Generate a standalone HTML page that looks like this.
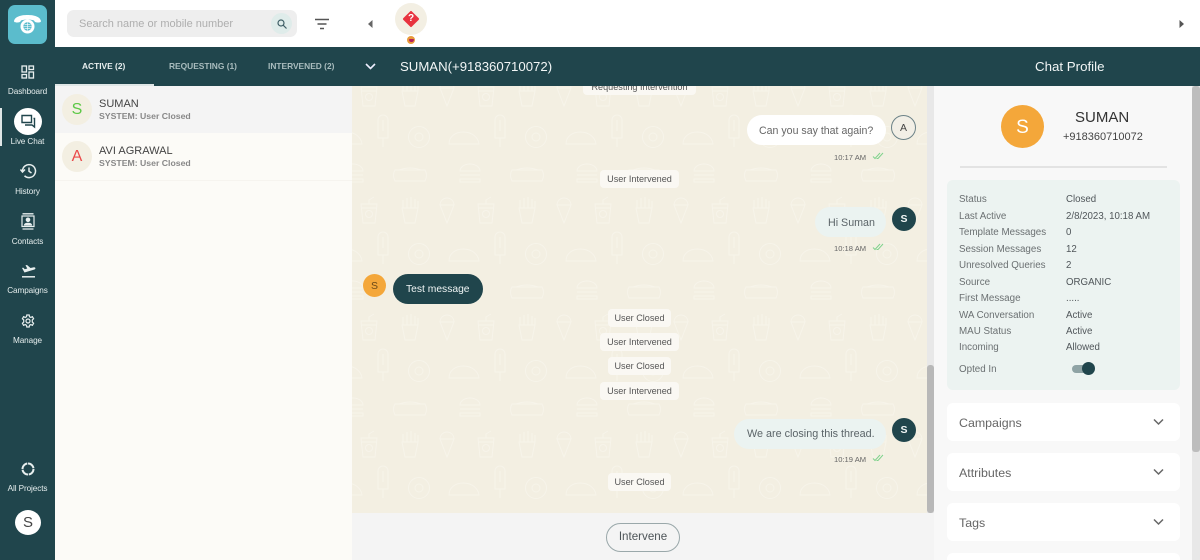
<!DOCTYPE html>
<html><head><meta charset="utf-8"><style>
*{box-sizing:border-box}
html,body{margin:0;width:1200px;height:560px;overflow:hidden;background:#fff;font-family:"Liberation Sans",sans-serif}
body{position:relative;filter:blur(.25px)}
.a{position:absolute}
.t{position:absolute;white-space:nowrap;line-height:1}
.nl{position:absolute;left:0;width:55px;text-align:center;font-size:8.2px;color:#e6eeee;line-height:1;white-space:nowrap;letter-spacing:-.1px;margin-top:1px}
.sys{position:absolute;background:#faf8f3;border-radius:4px;height:18px;font-size:9.1px;line-height:19px;text-align:center;color:#555;white-space:nowrap}
.row{position:absolute;left:959px;font-size:9.8px;color:#6b7072;white-space:nowrap;line-height:1}
.val{position:absolute;left:1066px;font-size:9.7px;color:#50565a;white-space:nowrap;line-height:1}
.card{position:absolute;left:947px;width:233px;height:38px;background:#fff;border-radius:6px}
.card span{position:absolute;left:12px;top:14px;font-size:12.4px;color:#666;line-height:1}
.card svg{position:absolute;left:206px;top:15px}
.time{position:absolute;font-size:7.6px;color:#666;line-height:1;white-space:nowrap}
.tab{position:absolute;top:62px;font-size:8.4px;font-weight:bold;line-height:1;white-space:nowrap}
</style></head><body>
<div class="a" style="left:55px;top:0;width:1145px;height:47px;background:#fff"></div>
<div class="a" style="left:67px;top:10px;width:230px;height:27px;background:#eeeeee;border-radius:7px"></div>
<div class="t" style="left:79px;top:18px;font-size:11px;line-height:12px;color:#aeaeae">Search name or mobile number</div>
<div class="a" style="left:271px;top:13px;width:21px;height:21px;border-radius:50%;background:#dfecea"></div>
<svg class="a" style="left:276px;top:18px" width="12" height="12" viewBox="0 0 12 12" fill="none" stroke="#3f5f66" stroke-width="1.200"><circle cx="5" cy="5" r="3"/><path d="M7.200 7.200 10.500 10.500"/></svg>
<svg class="a" style="left:314px;top:18px" width="16" height="12" viewBox="0 0 16 12" fill="none" stroke="#555" stroke-width="1.500"><path d="M1 1.500H15M3.500 6H12.500M6 10.500H10"/></svg>
<svg class="a" style="left:367px;top:20px" width="7" height="8" viewBox="0 0 7 8"><path d="M5.500 0V8L1 4Z" fill="#666"/></svg>
<div class="a" style="left:395px;top:3px;width:32px;height:32px;border-radius:50%;background:#f3efe3"></div>
<div class="a" style="left:405px;top:13px;width:12px;height:12px;background:#e8333f;transform:rotate(45deg);border-radius:1px"></div>
<div class="t" style="left:395px;top:14px;width:32px;text-align:center;font-size:10px;font-weight:bold;color:#fff">?</div>
<div class="a" style="left:407px;top:36px;width:8px;height:8px;border-radius:50%;background:#e89a3a"></div>
<div class="a" style="left:408.500px;top:39px;width:5px;height:3px;border-radius:1px 1px 3px 3px;background:#b01f5e"></div>
<svg class="a" style="left:1178px;top:20px" width="7" height="8" viewBox="0 0 7 8"><path d="M1.500 0V8L6 4Z" fill="#555"/></svg>

<div class="a" style="left:0;top:0;width:55px;height:560px;background:#20454c"></div>
<div class="a" style="left:8px;top:5px;width:39px;height:39px;border-radius:7px;background:#5bbccc"></div>
<svg class="a" style="left:13px;top:14px" width="30" height="22" viewBox="0 0 30 22"><path d="M1 7C2 2.500 8 1 14.500 1S27 2.500 28 7C28 8.500 26 8.500 24.500 8.500S21.500 8 21 6.500C19 5.300 10 5.300 8 6.500C7.500 8 6 8.500 4.500 8.500S1 8.500 1 7Z" fill="#fff"/><circle cx="14.500" cy="12.500" r="7" fill="#fff"/><circle cx="14.500" cy="12.500" r="4.200" fill="#5bbccc"/><path d="M10.500 12.500H18.500M14.500 8.500V16.500M11.500 10.300H17.500M11.500 14.700H17.500" stroke="#fff" stroke-width=".6"/></svg>

<svg class="a" style="left:21px;top:65px" width="14" height="14" viewBox="0 0 14 14" fill="none" stroke="#e8efef" stroke-width="1.300"><rect x="1" y="1" width="4.500" height="6"/><rect x="8" y="1" width="4.500" height="3.500"/><rect x="1" y="9.500" width="4.500" height="3.500"/><rect x="8" y="7" width="4.500" height="6"/></svg>
<div class="nl" style="top:87px">Dashboard</div>
<div class="a" style="left:0;top:108px;width:1.500px;height:38px;background:#dfe6e6"></div>
<div class="a" style="left:14px;top:108px;width:28px;height:27px;border-radius:50%;background:#fff"></div>
<svg class="a" style="left:20px;top:114px" width="16" height="15" viewBox="0 0 16 15" fill="none" stroke="#20454c" stroke-width="1.400"><path d="M2 1.500H11.500V8.500H2Z"/><path d="M13.500 4.500H14.500V13L12 11H5"/></svg>
<div class="nl" style="top:137px">Live Chat</div>
<svg class="a" style="left:20px;top:163px" width="17" height="16" viewBox="0 0 17 16" fill="none" stroke="#e8efef" stroke-width="1.500"><path d="M2.500 8A6.500 6.500 0 1 1 4.500 12.800"/><path d="M.5 6.500 2.500 9 5 6.500"/><path d="M9 4.500V8.200L11.500 10"/></svg>
<div class="nl" style="top:187px">History</div>
<svg class="a" style="left:21px;top:213px" width="14" height="17" viewBox="0 0 14 17" fill="none" stroke="#e8efef" stroke-width="1.200"><path d="M1.500 .8H12.500M1.500 16H12.500" stroke-width="1.300"/><rect x="1" y="3" width="12" height="10.500"/><circle cx="7" cy="6.800" r="1.700" fill="#e8efef"/><path d="M3.500 12C4 9.800 10 9.800 10.500 12Z" fill="#e8efef"/></svg>
<div class="nl" style="top:237px">Contacts</div>
<svg class="a" style="left:21px;top:265px" width="15" height="13" viewBox="0 0 15 13"><path d="M1 11.800H14" stroke="#e8efef" stroke-width="1.500"/><path d="M1 3 2.200 2.600 3.800 4.200 6.300 3.500 4.500 .3 6 0 9.500 3 13 2.200C14.800 2.200 14.800 4 13.500 4.500L3.500 7.500Z" fill="#e8efef"/></svg>
<div class="nl" style="top:286px">Campaigns</div>
<svg class="a" style="left:21px;top:314px" width="14" height="14" viewBox="0 0 14 14" fill="none" stroke="#e8efef" stroke-width="1.200"><circle cx="7" cy="7" r="2"/><path d="M5.800 1H8.200L8.500 2.700 9.800 3.400 11.400 2.700 12.600 4.800 11.300 5.900V8.100L12.600 9.200 11.400 11.300 9.800 10.600 8.500 11.300 8.200 13H5.800L5.500 11.300 4.200 10.600 2.600 11.300 1.400 9.200 2.700 8.100V5.900L1.400 4.800 2.600 2.700 4.200 3.400 5.500 2.700Z"/></svg>
<div class="nl" style="top:336px">Manage</div>
<svg class="a" style="left:21px;top:462px" width="14" height="14" viewBox="0 0 14 14" fill="none" stroke="#e8efef" stroke-width="2"><circle cx="7" cy="7" r="5.500" stroke-dasharray="7.800 .8"/></svg>
<div class="nl" style="top:484px">All Projects</div>
<div class="a" style="left:15px;top:510px;width:26px;height:25px;border-radius:50%;background:#fff"></div>
<div class="t" style="left:15px;top:515px;width:26px;text-align:center;font-size:15px;color:#444">S</div>

<div class="a" style="left:55px;top:86px;width:297px;height:474px;background:#fcfbf7"></div>
<div class="a" style="left:55px;top:86px;width:297px;height:47px;background:#f4f4f4"></div>
<div class="a" style="left:55px;top:180px;width:297px;height:1px;background:#f6f4ef"></div>
<div class="a" style="left:62px;top:94px;width:30px;height:31px;border-radius:50%;background:#f3efe2"></div>
<div class="t" style="left:62px;top:102px;width:30px;text-align:center;font-size:16px;color:#5cc845">S</div>
<div class="t" style="left:99px;top:99px;font-size:11px;color:#444">SUMAN</div>
<div class="t" style="left:99px;top:112px;font-size:8.700px;color:#888;font-weight:bold">SYSTEM: User Closed</div>
<div class="a" style="left:62px;top:141px;width:30px;height:31px;border-radius:50%;background:#f3efe2"></div>
<div class="t" style="left:62px;top:149px;width:30px;text-align:center;font-size:16px;color:#ea4a4a">A</div>
<div class="t" style="left:99px;top:146px;font-size:11px;color:#444">AVI AGRAWAL</div>
<div class="t" style="left:99px;top:159px;font-size:8.700px;color:#888;font-weight:bold">SYSTEM: User Closed</div>

<svg class="a" style="left:352px;top:86px" width="575" height="427">
<defs><pattern id="p" x="0" y="-8" width="117" height="117" patternUnits="userSpaceOnUse">
<rect width="117" height="117" fill="#f3efe2"/>
<g fill="none" stroke="#f7f4ea" stroke-width="1">
<path d="M9 9H25L23 28H11ZM10 13H24M17 9V5L22 2"/><circle cx="17" cy="19" r="3.500"/>
<path d="M50 13H66L63 28H53ZM51 13V5M55 13V3M59 13V2M63 13V4M66 13V6"/>
<path d="M88 10H102L95 28ZM88 10A7 7 0 0 1 102 10"/>
<path d="M26 42A5 5 0 0 1 36 42V60H26ZM31 60V69M31 42V53"/>
<circle cx="67" cy="59" r="10.500"/><circle cx="67" cy="59" r="4"/>
<path d="M97 66C97 50 125 50 127 66Z"/><path d="M-20 66C-20 50 8 50 10 66Z"/>
<path d="M43 92H73Q76 97 73 103H43Q40 97 43 92ZM47 92Q58 88 69 92"/>
<path d="M-9 93A10 7 0 0 1 11 93ZM-9 97H11M-9 101H11V104H-9ZM108 93A10 7 0 0 1 128 93ZM108 97H128M108 101H128V104H108Z"/>
</g></pattern></defs>
<rect width="575" height="427" fill="url(#p)"/></svg>

<div class="sys" style="left:583px;top:78px;width:113px;height:17px;">Requesting Intervention</div>
<div class="a" style="left:55px;top:47px;width:1145px;height:39px;background:#20454c"></div>
<div class="a" style="left:55px;top:84px;width:99px;height:2px;background:#dfe6e6"></div>
<div class="tab" style="left:82px;color:#e8efef">ACTIVE (2)</div>
<div class="tab" style="left:169px;color:#a9bcbe">REQUESTING (1)</div>
<div class="tab" style="left:268px;color:#a9bcbe">INTERVENED (2)</div>
<svg class="a" style="left:365px;top:62px" width="11" height="9" viewBox="0 0 11 9" fill="none" stroke="#eef" stroke-width="1.600"><path d="M1 2 5.500 6.500 10 2"/></svg>
<div class="t" style="left:400px;top:60px;font-size:13.200px;color:#f2f6f6">SUMAN(+918360710072)</div>
<div class="t" style="left:1035px;top:60px;font-size:13.300px;color:#f2f6f6">Chat Profile</div>

<div class="a" style="left:747px;top:115px;width:139px;height:30px;border-radius:15px;background:#fff"></div>
<div class="t" style="left:759px;top:126px;font-size:10.600px;color:#666">Can you say that again?</div>
<div class="a" style="left:891px;top:115px;width:25px;height:25px;border-radius:50%;background:#f2efe6;border:1px solid #6c8287"></div>
<div class="t" style="left:891px;top:123px;width:25px;text-align:center;font-size:10.500px;color:#444">A</div>
<div class="time" style="left:834px;top:154px">10:17 AM</div>
<svg class="a" style="left:872px;top:152px" width="12" height="8" viewBox="0 0 12 8" fill="none" stroke="#7fd28c" stroke-width="1"><path d="M1 4.500 3 6.500 8 1M4.500 6.500 6 6.500 11 1"/></svg>

<div class="sys" style="left:600px;top:170px;width:79px">User Intervened</div>

<div class="a" style="left:815px;top:207px;width:71px;height:30px;border-radius:15px;background:#ebf3f1"></div>
<div class="t" style="left:828px;top:218px;font-size:10.700px;color:#5b6468">Hi Suman</div>
<div class="a" style="left:892px;top:207px;width:24px;height:24px;border-radius:50%;background:#20454c"></div>
<div class="t" style="left:892px;top:214px;width:24px;text-align:center;font-size:10.500px;color:#f0f5f5;font-weight:bold">S</div>
<div class="time" style="left:834px;top:245px">10:18 AM</div>
<svg class="a" style="left:872px;top:243px" width="12" height="8" viewBox="0 0 12 8" fill="none" stroke="#7fd28c" stroke-width="1"><path d="M1 4.500 3 6.500 8 1M4.500 6.500 6 6.500 11 1"/></svg>

<div class="a" style="left:363px;top:274px;width:23px;height:23px;border-radius:50%;background:#f4a73a"></div>
<div class="t" style="left:363px;top:281px;width:23px;text-align:center;font-size:10.500px;color:#6b4a18">S</div>
<div class="a" style="left:393px;top:274px;width:90px;height:30px;border-radius:15px;background:#20454c"></div>
<div class="t" style="left:406px;top:285px;font-size:10.300px;color:#f0f5f5">Test message</div>

<div class="sys" style="left:608px;top:309px;width:63px">User Closed</div>
<div class="sys" style="left:600px;top:333px;width:79px">User Intervened</div>
<div class="sys" style="left:608px;top:357px;width:63px">User Closed</div>
<div class="sys" style="left:600px;top:382px;width:79px">User Intervened</div>

<div class="a" style="left:734px;top:419px;width:152px;height:30px;border-radius:15px;background:#ebf3f1"></div>
<div class="t" style="left:747px;top:429px;font-size:10.800px;color:#5b6468">We are closing this thread.</div>
<div class="a" style="left:892px;top:418px;width:24px;height:24px;border-radius:50%;background:#20454c"></div>
<div class="t" style="left:892px;top:425px;width:24px;text-align:center;font-size:10.500px;color:#f0f5f5;font-weight:bold">S</div>
<div class="time" style="left:834px;top:456px">10:19 AM</div>
<svg class="a" style="left:872px;top:454px" width="12" height="8" viewBox="0 0 12 8" fill="none" stroke="#7fd28c" stroke-width="1"><path d="M1 4.500 3 6.500 8 1M4.500 6.500 6 6.500 11 1"/></svg>

<div class="sys" style="left:608px;top:473px;width:63px">User Closed</div>

<div class="a" style="left:927px;top:86px;width:7px;height:427px;background:#e8e8e8"></div>
<div class="a" style="left:927px;top:365px;width:7px;height:148px;background:#b8b8b8;border-radius:3px"></div>
<div class="a" style="left:352px;top:513px;width:582px;height:47px;background:#f4f4f4"></div>
<div class="a" style="left:606px;top:523px;width:74px;height:29px;border-radius:15px;border:1px solid #9aa8aa;background:#f4f4f4"></div>
<div class="t" style="left:606px;top:531px;width:74px;text-align:center;font-size:11.600px;color:#4d5458">Intervene</div>

<div class="a" style="left:934px;top:86px;width:258px;height:474px;background:#f8f8f8"></div>
<div class="a" style="left:1192px;top:86px;width:8px;height:474px;background:#e8e8e8"></div>
<div class="a" style="left:1192px;top:86px;width:8px;height:366px;background:#bdbdbd;border-radius:3px"></div>
<div class="a" style="left:1001px;top:105px;width:43px;height:43px;border-radius:50%;background:#f4a73a"></div>
<div class="t" style="left:1001px;top:118px;width:43px;text-align:center;font-size:19px;color:#fff">S</div>
<div class="t" style="left:1075px;top:110px;font-size:15px;color:#333">SUMAN</div>
<div class="t" style="left:1063px;top:132px;font-size:11px;color:#444">+918360710072</div>
<div class="a" style="left:960px;top:166px;width:207px;height:2px;background:#e3e3e3"></div>
<div class="a" style="left:947px;top:180px;width:233px;height:210px;border-radius:6px;background:#ecf3f1"></div>

<div class="row" style="top:195px">Status</div><div class="val" style="top:195px">Closed</div>
<div class="row" style="top:212px">Last Active</div><div class="val" style="top:212px">2/8/2023, 10:18 AM</div>
<div class="row" style="top:228px">Template Messages</div><div class="val" style="top:228px">0</div>
<div class="row" style="top:245px">Session Messages</div><div class="val" style="top:245px">12</div>
<div class="row" style="top:261px">Unresolved Queries</div><div class="val" style="top:261px">2</div>
<div class="row" style="top:278px">Source</div><div class="val" style="top:278px">ORGANIC</div>
<div class="row" style="top:294px">First Message</div><div class="val" style="top:294px">.....</div>
<div class="row" style="top:311px">WA Conversation</div><div class="val" style="top:311px">Active</div>
<div class="row" style="top:327px">MAU Status</div><div class="val" style="top:327px">Active</div>
<div class="row" style="top:343px">Incoming</div><div class="val" style="top:343px">Allowed</div>
<div class="row" style="top:365px">Opted In</div>
<div class="a" style="left:1072px;top:365px;width:20px;height:8px;border-radius:4px;background:#8fa3a5"></div>
<div class="a" style="left:1082px;top:362px;width:13px;height:13px;border-radius:50%;background:#20454c"></div>

<div class="card" style="top:403px"><span>Campaigns</span><svg width="11" height="8" viewBox="0 0 11 8" fill="none" stroke="#666" stroke-width="1.500"><path d="M1 1.500 5.500 6 10 1.500"/></svg></div>
<div class="card" style="top:453px"><span>Attributes</span><svg width="11" height="8" viewBox="0 0 11 8" fill="none" stroke="#666" stroke-width="1.500"><path d="M1 1.500 5.500 6 10 1.500"/></svg></div>
<div class="card" style="top:503px"><span>Tags</span><svg width="11" height="8" viewBox="0 0 11 8" fill="none" stroke="#666" stroke-width="1.500"><path d="M1 1.500 5.500 6 10 1.500"/></svg></div>
<div class="card" style="top:553px;height:7px;border-radius:6px 6px 0 0"></div>
</body></html>
